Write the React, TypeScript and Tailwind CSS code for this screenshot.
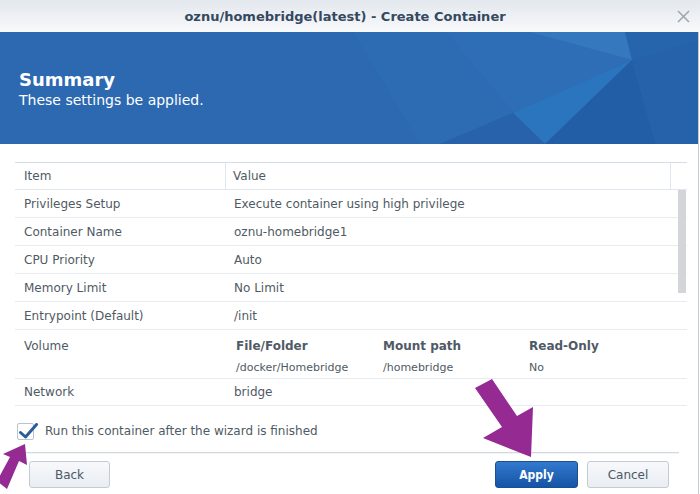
import React from "react";

const rows: { k: string; v: string }[] = [
  { k: "Privileges Setup", v: "Execute container using high privilege" },
  { k: "Container Name", v: "oznu-homebridge1" },
  { k: "CPU Priority", v: "Auto" },
  { k: "Memory Limit", v: "No Limit" },
  { k: "Entrypoint (Default)", v: "/init" },
];

function Banner() {
  return (
    <div className="relative h-[112px] bg-[#2c69b1] overflow-hidden">
      <svg className="absolute inset-0" width="699" height="112" viewBox="0 32 699 112" preserveAspectRatio="none">
        <polygon points="353,32 446,32 513,113 440,144 420,144" fill="#2d6bb3" />
        <polygon points="446,32 530,32 632,60 513,113" fill="#2e6eb6" />
        <polygon points="530,32 625,32 632,60" fill="#3678bd" />
        <polygon points="625,32 699,32 699,40 632,60" fill="#2664ac" />
        <polygon points="632,60 513,113 545,144" fill="#2a75bd" />
        <polygon points="632,60 545,144 656,144" fill="#225ea5" />
        <polygon points="632,60 699,40 699,144 656,144" fill="#2562a9" />
        <polygon points="513,113 545,144 440,144" fill="#2762aa" />
      </svg>
      <div className="relative h-full flex flex-col justify-center px-[19px] pt-[2px] text-white">
        <div className="text-[18px] font-bold leading-[22px]">Summary</div>
        <div className="text-[14px] leading-[18px]">These settings be applied.</div>
      </div>
    </div>
  );
}

export default function App() {
  return (
    <div
      className="relative w-[700px] h-[494px] bg-white overflow-hidden text-[#505a64]"
      style={{ fontFamily: '"DejaVu Sans", Verdana, sans-serif' }}
    >
      {/* Title bar */}
      <div className="h-[32px] flex items-center bg-gradient-to-b from-[#e3e8ee] to-[#f8f9fb]">
        <div className="flex-1" />
        <div className="text-[13px] font-bold text-[#34495f] leading-none">
          oznu/homebridge(latest) - Create Container
        </div>
        <div className="flex-1 flex justify-end pr-[10px]">
          <svg width="13" height="13" viewBox="0 0 13 13">
            <line x1="1" y1="1" x2="12" y2="12" stroke="#a0a7b0" strokeWidth="1.6" />
            <line x1="12" y1="1" x2="1" y2="12" stroke="#a0a7b0" strokeWidth="1.6" />
          </svg>
        </div>
      </div>

      <div className="w-[699px] h-[462px] border-r border-[#c9ced4] flex flex-col">
        <Banner />

        {/* Table */}
        <div className="mt-[18px] mx-[15px] w-[672px] text-[12px]">
          <div className="flex h-[28px] border-t border-b border-t-[#d5dde7] border-b-[#e1e7ee]">
            <div className="w-[211px] border-r border-[#e1e7ee] pl-[9px] flex items-center">Item</div>
            <div className="flex-1 pl-[7px] flex items-center">Value</div>
            <div className="w-[17px] border-l border-[#e1e7ee]" />
          </div>
          <div className="relative">
            {rows.map((r) => (
              <div key={r.k} className="flex h-[28px] border-b border-[#e8ecf0] items-center">
                <div className="w-[210px] pl-[9px]">{r.k}</div>
                <div className="flex-1 pl-[9px]">{r.v}</div>
              </div>
            ))}
            <div className="flex h-[49px] border-b border-[#e8ecf0]">
              <div className="w-[210px] pl-[9px] pt-[7px]">Volume</div>
              <div className="flex-1 pl-[11px] pt-[9px]">
                <div className="grid grid-cols-[147px_146px_120px] font-bold text-[12px] leading-[15px] text-[#4f5a66]">
                  <div>File/Folder</div>
                  <div>Mount path</div>
                  <div>Read-Only</div>
                </div>
                <div className="grid grid-cols-[147px_146px_120px] text-[11px] leading-[14px] mt-[7px]">
                  <div>/docker/Homebridge</div>
                  <div>/homebridge</div>
                  <div>No</div>
                </div>
              </div>
            </div>
            <div className="flex h-[27px] border-b border-[#e8ecf0] items-center">
              <div className="w-[210px] pl-[9px]">Network</div>
              <div className="flex-1 pl-[9px]">bridge</div>
            </div>
            <div className="absolute right-[1px] top-0 w-[8px] h-[103px] bg-[#d4d5d8]" />
          </div>
        </div>

        {/* Checkbox */}
        <div className="mt-[16px] ml-[17px] flex items-center h-[18px]">
          <div className="relative w-[17px] h-[17px] border border-[#b9c3cd] rounded-[2px] bg-white">
            <svg className="absolute left-[1px] top-[-3px]" width="20" height="20" viewBox="0 0 20 20">
              <path d="M1.5 11.5 L6.5 16 L17.5 3.5" fill="none" stroke="#2b5d9d" strokeWidth="3" strokeLinecap="round" strokeLinejoin="round" />
            </svg>
          </div>
          <span className="ml-[11px] text-[12px]">Run this container after the wizard is finished</span>
        </div>

        {/* Separator */}
        <div className="mt-[12px] ml-[15px] w-[664px] h-[2px] border-t border-[#d3d8de] bg-[#f3f5f7]" />

        {/* Footer */}
        <div className="mt-[7px] flex items-center pl-[29px] pr-[29px]">
          <button className="w-[81px] h-[27px] rounded-[3px] border border-[#c3ccd6] bg-gradient-to-b from-[#f7f9fb] to-[#e9edf2] text-[12px] text-[#4b5866]">
            Back
          </button>
          <div className="flex-1" />
          <button
            className="w-[83px] h-[27px] rounded-[3px] border border-[#1b4f92] bg-gradient-to-b from-[#3279cf] to-[#1554a6] text-white font-bold text-[12px]"
            style={{ fontFamily: '"DejaVu Sans Condensed", "DejaVu Sans", sans-serif' }}
          >
            Apply
          </button>
          <button className="ml-[9px] w-[82px] h-[27px] rounded-[3px] border border-[#c3ccd6] bg-gradient-to-b from-[#f7f9fb] to-[#e9edf2] text-[12px] text-[#4b5866]">
            Cancel
          </button>
        </div>
      </div>

      {/* Annotation arrows */}
      <svg className="absolute left-0 top-0 pointer-events-none" width="700" height="494" viewBox="0 0 700 494">
        <polygon points="475,388 492,379 517,416 533,407 531,457 483,438 502,427" fill="#952a92" />
        <polygon points="25,444 27,465 19,461 7,489 -3,481 10,457 3,454" fill="#952a92" />
      </svg>
    </div>
  );
}
